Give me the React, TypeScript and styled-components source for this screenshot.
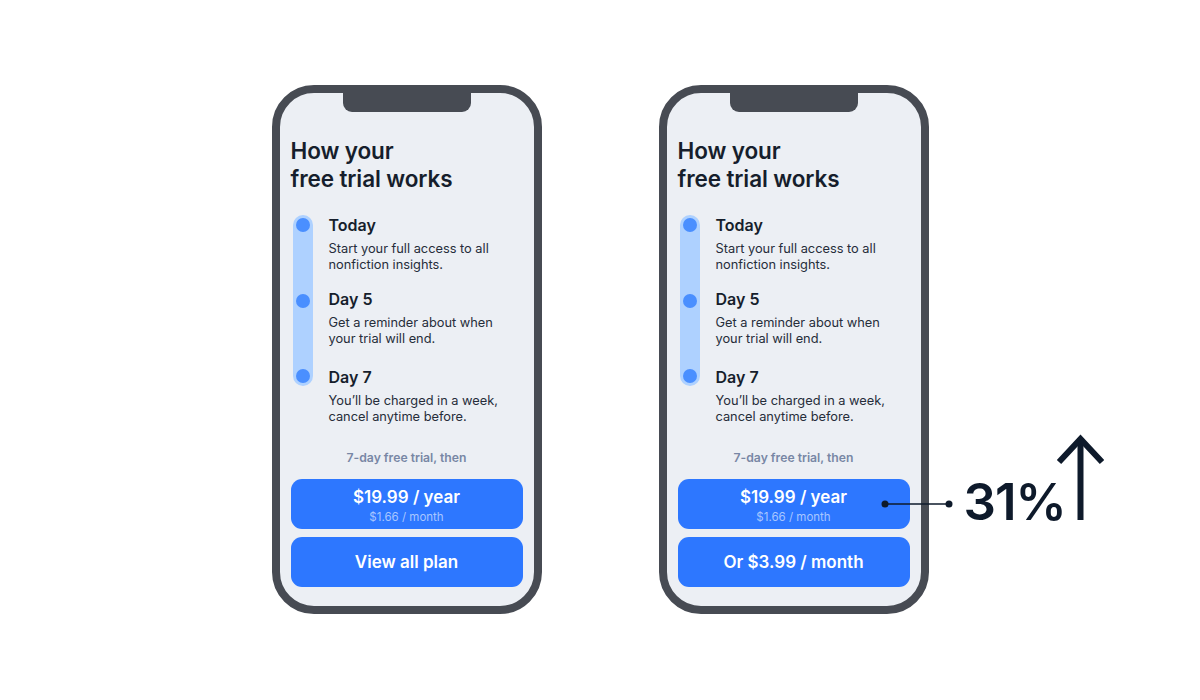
import React from "react";
import styled, { createGlobalStyle } from "styled-components";

const GlobalStyle = createGlobalStyle`
  * { box-sizing: border-box; }
  html, body { margin: 0; padding: 0; background: #ffffff; }
  body { font-family: Inter, "Noto Sans", sans-serif; -webkit-font-smoothing: antialiased; }
`;

const Stage = styled.main`
  width: 1200px;
  height: 700px;
  display: flex;
  justify-content: center;
  align-items: flex-start;
  gap: 117px;
  padding-top: 85px;
`;

const Phone = styled.section`
  position: relative;
  width: 270px;
  height: 529px;
  border: 8px solid #474b53;
  border-radius: 42px;
  background: #eceff4;
  padding: 0 11px;
  display: flex;
  flex-direction: column;
`;

const Notch = styled.div`
  width: 128px;
  height: 19px;
  margin: 0 auto;
  background: #474b53;
  border-radius: 0 0 9px 9px;
  flex-shrink: 0;
`;

const Title = styled.h1`
  margin: 25px 0 0;
  font-size: 22.5px;
  line-height: 28px;
  font-weight: 600;
  color: #161e2c;
  letter-spacing: -0.1px;
`;

const Timeline = styled.div`
  margin-top: 22px;
  display: flex;
  gap: 16px;
  padding-left: 2px;
`;

const Track = styled.div`
  width: 20px;
  height: 171px;
  flex-shrink: 0;
  border-radius: 10px;
  background: #aed1ff;
  padding: 3px;
  display: flex;
  flex-direction: column;
  justify-content: space-between;
`;

const Dot = styled.span`
  display: block;
  width: 14px;
  height: 14px;
  border-radius: 50%;
  background: #4a8fff;
`;

const Steps = styled.ol`
  list-style: none;
  margin: 0;
  padding: 0;
  display: flex;
  flex-direction: column;
  gap: 16px;
`;

const Step = styled.li`
  display: flex;
  flex-direction: column;
  gap: 6px;
  &:last-child { margin-top: 4px; }
`;

const StepTitle = styled.span`
  font-size: 16px;
  line-height: 20px;
  font-weight: 600;
  color: #161e2c;
`;

const StepText = styled.span`
  font-size: 12.8px;
  line-height: 16px;
  font-weight: 400;
  color: #262d3a;
`;

const TrialNote = styled.p`
  margin: 25px 0 0;
  text-align: center;
  font-size: 12.2px;
  line-height: 16px;
  font-weight: 600;
  color: #7887a5;
`;

const Buttons = styled.div`
  margin-top: 13px;
  display: flex;
  flex-direction: column;
  gap: 8px;
`;

const PlanButton = styled.button<{ $stacked?: boolean }>`
  position: relative;
  height: 50px;
  width: 100%;
  border: none;
  border-radius: 11px;
  background: #2d77ff;
  color: #ffffff;
  font-family: inherit;
  display: flex;
  flex-direction: column;
  align-items: center;
  justify-content: ${(p) => (p.$stacked ? "flex-start" : "center")};
  padding: ${(p) => (p.$stacked ? "8px 0 0" : "0")};
  cursor: pointer;
`;

const PlanPrice = styled.span`
  font-size: 17px;
  line-height: 20px;
  font-weight: 600;
`;

const PlanSub = styled.span`
  margin-top: 3px;
  font-size: 11.5px;
  line-height: 14px;
  font-weight: 400;
  color: #a8c6ff;
`;

const Annotation = styled.div`
  position: absolute;
  left: 214px;
  top: 341px;
  display: flex;
  align-items: flex-start;
  color: #0e1a2b;
  pointer-events: none;
`;

const Connector = styled.svg`
  margin-top: 65px;
  flex-shrink: 0;
`;

const Lift = styled.span`
  margin: 43px 0 0 11px;
  font-size: 51px;
  line-height: 50px;
  font-weight: 600;
  letter-spacing: -1px;
  white-space: nowrap;
`;

const Arrow = styled.svg`
  margin-left: -10px;
  flex-shrink: 0;
`;

const steps = [
  { title: "Today", text: ["Start your full access to all", "nonfiction insights."] },
  { title: "Day 5", text: ["Get a reminder about when", "your trial will end."] },
  { title: "Day 7", text: ["You’ll be charged in a week,", "cancel anytime before."] },
];

function TrialPhone({ secondary, children }: { secondary: string; children?: React.ReactNode }) {
  return (
    <Phone>
      <Notch />
      <Title>
        How your
        <br />
        free trial works
      </Title>
      <Timeline>
        <Track>
          <Dot />
          <Dot />
          <Dot />
        </Track>
        <Steps>
          {steps.map((s) => (
            <Step key={s.title}>
              <StepTitle>{s.title}</StepTitle>
              <StepText>
                {s.text[0]}
                <br />
                {s.text[1]}
              </StepText>
            </Step>
          ))}
        </Steps>
      </Timeline>
      <TrialNote>7-day free trial, then</TrialNote>
      <Buttons>
        <PlanButton $stacked>
          <PlanPrice>$19.99 / year</PlanPrice>
          <PlanSub>$1.66 / month</PlanSub>
        </PlanButton>
        <PlanButton>
          <PlanPrice>{secondary}</PlanPrice>
        </PlanButton>
      </Buttons>
      {children}
    </Phone>
  );
}

export default function App() {
  return (
    <>
      <GlobalStyle />
      <Stage>
        <TrialPhone secondary="View all plan" />
        <TrialPhone secondary="Or $3.99 / month">
          <Annotation>
            <Connector width="72" height="10" viewBox="0 0 72 10">
              <line x1="4" y1="5" x2="68" y2="5" stroke="#0e1a2b" strokeWidth="1.4" />
              <circle cx="4" cy="5" r="3.5" fill="#0e1a2b" />
              <circle cx="68" cy="5" r="3.5" fill="#0e1a2b" />
            </Connector>
            <Lift>31%</Lift>
            <Arrow width="48" height="88" viewBox="0 0 48 88">
              <line x1="24.5" y1="4" x2="24.5" y2="86" stroke="#0e1a2b" strokeWidth="6" />
              <polyline
                points="3,28 24.5,5 46,28"
                fill="none"
                stroke="#0e1a2b"
                strokeWidth="6"
                strokeLinejoin="miter"
              />
            </Arrow>
          </Annotation>
        </TrialPhone>
      </Stage>
    </>
  );
}
